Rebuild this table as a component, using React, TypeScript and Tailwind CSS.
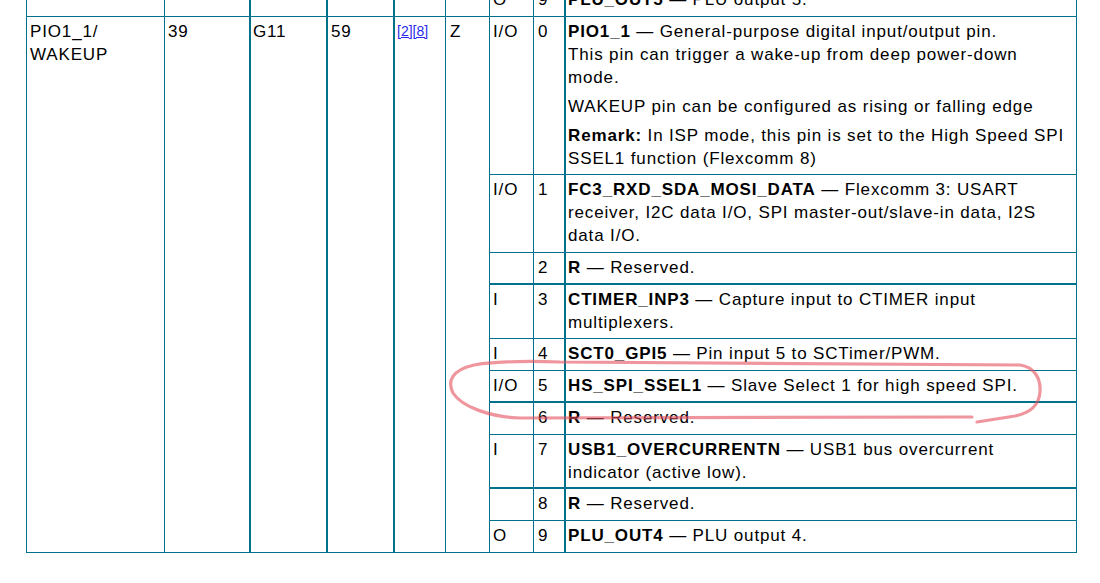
import React from 'react';

type SubRowProps = {
  io?: string;
  num: string;
  children: React.ReactNode;
  thick?: boolean;
  last?: boolean;
};

function SubRow({ io, num, children, thick, last }: SubRowProps) {
  const rowBorder = last ? '' : thick ? 'border-b-2' : 'border-b';
  const pad = thick ? 'pt-[3px] pb-[3.7px]' : 'pt-[3px] pb-[4.7px]';
  return (
    <div className={`flex border-[#00718a] ${rowBorder}`}>
      <div className={`w-[44px] shrink-0 border-r border-[#00718a] pl-[3px] ${pad}`}>{io}</div>
      <div className={`w-[32px] shrink-0 border-r-2 border-[#00718a] pl-[4px] ${pad}`}>{num}</div>
      <div className={`flex-1 pl-[2px] whitespace-nowrap ${pad}`}>{children}</div>
    </div>
  );
}

export default function App() {
  return (
    <div className="relative w-[1100px] h-[583px] overflow-hidden bg-white text-black font-['Liberation_Sans',Arial,sans-serif] text-[17px] leading-[23px] tracking-[0.85px]">
      <div className="ml-[26px] w-[1051px] -mt-[15px] border-l border-r border-b border-[#00718a]">
        {/* partial row from the previous pin */}
        <div className="flex border-b border-[#00718a]">
          <div className="w-[138px] shrink-0 border-r border-[#00718a]" />
          <div className="w-[86px] shrink-0 border-r-2 border-[#00718a]" />
          <div className="w-[77px] shrink-0 border-r-2 border-[#00718a]" />
          <div className="w-[67px] shrink-0 border-r-2 border-[#00718a]" />
          <div className="w-[51px] shrink-0 border-r border-[#00718a]" />
          <div className="w-[44px] shrink-0 border-r border-[#00718a]" />
          <div className="flex-1">
            <SubRow io="O" num="9" last>
              <b>PLU_OUT5</b> — PLU output 5.
            </SubRow>
          </div>
        </div>

        {/* main row */}
        <div className="flex">
          <div className="w-[138px] shrink-0 border-r border-[#00718a] pl-[3px] pt-[3px]">
            PIO1_1/
            <br />
            WAKEUP
          </div>
          <div className="w-[86px] shrink-0 border-r-2 border-[#00718a] pl-[3px] pt-[3px]">39</div>
          <div className="w-[77px] shrink-0 border-r-2 border-[#00718a] pl-[2px] pt-[3px]">G11</div>
          <div className="w-[67px] shrink-0 border-r-2 border-[#00718a] pl-[3px] pt-[3px]">59</div>
          <div className="w-[51px] shrink-0 border-r border-[#00718a] pl-[2px] pt-[3px]">
            <a className="text-[14px] tracking-[0px] text-[#2b2bf0] underline align-[4px]" href="#">
              [2][8]
            </a>
          </div>
          <div className="w-[44px] shrink-0 border-r border-[#00718a] pl-[4px] pt-[3px]">Z</div>
          <div className="flex-1 flex flex-col">
            <SubRow io="I/O" num="0">
              <p>
                <b>PIO1_1</b> — General-purpose digital input/output pin.
                <br />
                This pin can trigger a wake-up from deep power-down
                <br />
                mode.
              </p>
              <p className="mt-[6px]">WAKEUP pin can be configured as rising or falling edge</p>
              <p className="mt-[6px]">
                <b>Remark:</b> In ISP mode, this pin is set to the High Speed SPI
                <br />
                SSEL1 function (Flexcomm 8)
              </p>
            </SubRow>
            <SubRow io="I/O" num="1">
              <b>FC3_RXD_SDA_MOSI_DATA</b> — Flexcomm 3: USART
              <br />
              receiver, I2C data I/O, SPI master-out/slave-in data, I2S
              <br />
              data I/O.
            </SubRow>
            <SubRow num="2" thick>
              <b>R</b> — Reserved.
            </SubRow>
            <SubRow io="I" num="3">
              <b>CTIMER_INP3</b> — Capture input to CTIMER input
              <br />
              multiplexers.
            </SubRow>
            <SubRow io="I" num="4">
              <b>SCT0_GPI5</b> — Pin input 5 to SCTimer/PWM.
            </SubRow>
            <SubRow io="I/O" num="5" thick>
              <b>HS_SPI_SSEL1</b> — Slave Select 1 for high speed SPI.
            </SubRow>
            <SubRow num="6">
              <b>R</b> — Reserved.
            </SubRow>
            <SubRow io="I" num="7" thick>
              <b>USB1_OVERCURRENTN</b> — USB1 bus overcurrent
              <br />
              indicator (active low).
            </SubRow>
            <SubRow num="8">
              <b>R</b> — Reserved.
            </SubRow>
            <SubRow io="O" num="9" last>
              <b>PLU_OUT4</b> — PLU output 4.
            </SubRow>
          </div>
        </div>
      </div>

      {/* hand-drawn red annotation loop */}
      <svg className="pointer-events-none absolute left-0 top-0" width="1100" height="583" viewBox="0 0 1100 583">
        <defs>
          <filter id="soft" x="-5%" y="-50%" width="110%" height="200%">
            <feGaussianBlur stdDeviation="0.7" />
          </filter>
        </defs>
        <path
          d="M 972 417 L 520 418 C 490 417, 462 407, 453 393 C 447 381, 452 370, 474 365 C 498 361, 530 361, 560 362 L 1020 365 C 1034 367, 1041 378, 1040 392 C 1039 405, 1030 413, 1015 416 L 977 422"
          fill="none"
          stroke="#e4505e"
          strokeOpacity="0.6"
          strokeWidth="3.2"
          strokeLinecap="round"
          strokeLinejoin="round"
          filter="url(#soft)"
        />
      </svg>
    </div>
  );
}
